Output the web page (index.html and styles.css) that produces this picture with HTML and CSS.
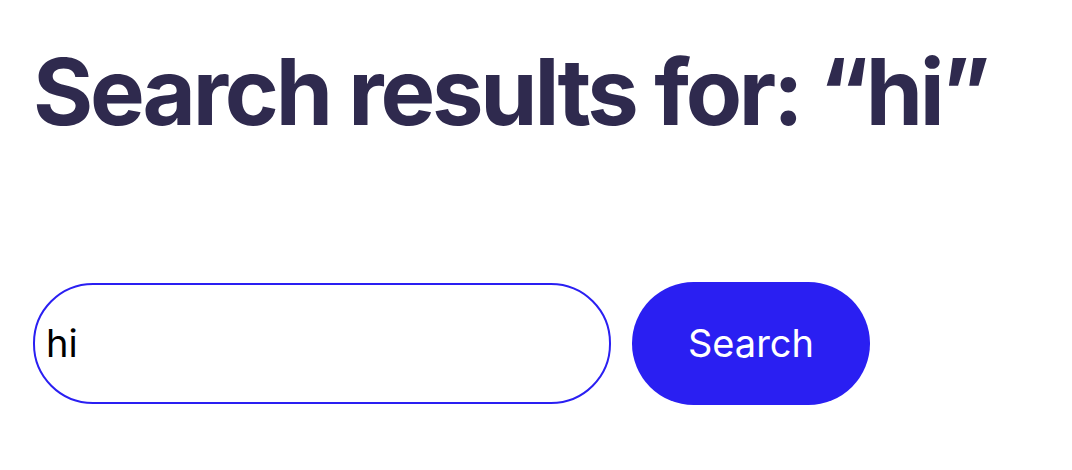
FILE: index.html
```html
<!DOCTYPE html>
<html lang="en">
<head>
    <meta charset="UTF-8" />
    <title>Search results</title>
    <link rel="stylesheet" href="styles.css">
</head>
<body>
    <main class="page">
        <h1 class="results-title">Search results for: &ldquo;hi&rdquo;</h1>

        <form class="search-form">
            <input type="text" class="search-input" value="hi" />
            <button type="submit" class="search-button">Search</button>
        </form>
    </main>
</body>
</html>
```

FILE: styles.css
```css
/* General Reset */
* {
    box-sizing: border-box;
    margin: 0;
    padding: 0;
}

body {
    background-color: #fff;
    font-family: 'Inter', sans-serif;
}

.page {
    padding: 39px 33px;
}

.results-title {
    font-size: 92px;
    font-weight: 700;
    line-height: 1.15;
    color: #2f2a4e;
    letter-spacing: -3.2px;
    white-space: nowrap;
    margin-bottom: 137px;
}

/* Search form */
.search-form {
    display: flex;
    align-items: center;
    gap: 21px;
}

.search-input {
    width: 578px;
    height: 121px;
    padding: 0 11px;
    border: 2px solid #2a1ff2;
    border-radius: 60px;
    font-size: 38px;
    font-family: 'Inter', sans-serif;
    color: #000;
    outline: none;
}

.search-button {
    width: 238px;
    height: 123px;
    border: none;
    border-radius: 62px;
    background-color: #2a1ff2;
    color: #fff;
    font-size: 38px;
    font-family: 'Inter', sans-serif;
    cursor: pointer;
}
```
